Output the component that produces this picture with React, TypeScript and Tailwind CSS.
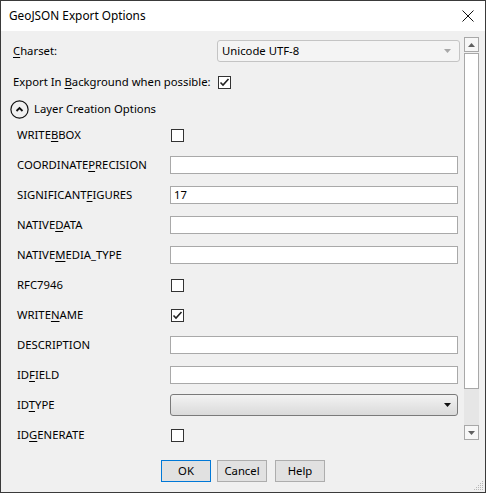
import React from 'react';

type Row = {
  pre: string;
  key?: string;
  post?: string;
  kind: 'check' | 'text' | 'select';
  checked?: boolean;
  value?: string;
};

const rows: Row[] = [
  { pre: 'WRITE', key: 'B', post: 'BOX', kind: 'check' },
  { pre: 'COORDINATE', key: 'P', post: 'RECISION', kind: 'text' },
  { pre: 'SIGNIFICANT', key: 'F', post: 'IGURES', kind: 'text', value: '17' },
  { pre: 'NATIVE', key: 'D', post: 'ATA', kind: 'text' },
  { pre: 'NATIVE', key: 'M', post: 'EDIA_TYPE', kind: 'text' },
  { pre: 'RFC7946', kind: 'check' },
  { pre: 'WRITE', key: 'N', post: 'AME', kind: 'check', checked: true },
  { pre: 'DESCRIPTION', kind: 'text' },
  { pre: 'ID', key: 'F', post: 'IELD', kind: 'text' },
  { pre: 'ID', key: 'T', post: 'YPE', kind: 'select' },
  { pre: 'ID', key: 'G', post: 'ENERATE', kind: 'check' },
];

function CheckBox({ checked }: { checked?: boolean }) {
  return (
    <div className="w-[13px] h-[13px] border border-[#333333] bg-white flex items-center justify-center">
      {checked && (
        <svg width="11" height="11" viewBox="0 0 11 11">
          <polyline points="1.5,5.5 4,8 9.5,2" fill="none" stroke="#222" strokeWidth="1.6" />
        </svg>
      )}
    </div>
  );
}

function Label({ pre, k, post }: { pre: string; k?: string; post?: string }) {
  return (
    <span className="whitespace-nowrap">
      {pre}
      {k && <u className="underline-offset-[2px]">{k}</u>}
      {post}
    </span>
  );
}

export default function App() {
  return (
    <div
      className="relative w-[486px] h-[493px] bg-[#f0f0f0] border border-[#3a3a3a] text-[11.3px] text-black overflow-hidden"
      style={{ fontFamily: '"Noto Sans", "Open Sans", sans-serif' }}
    >
      {/* Title bar */}
      <div className="h-[30px] bg-white flex items-center justify-between pl-[8px] pr-[11px]">
        <span className="text-[11.8px]">GeoJSON Export Options</span>
        <svg width="12" height="12" viewBox="0 0 12 12">
          <path d="M0.5 0.5 L11.5 11.5 M11.5 0.5 L0.5 11.5" stroke="#111" strokeWidth="1" />
        </svg>
      </div>

      <div className="flex">
        {/* Content */}
        <div className="w-[462px] pl-[12px]">
          <div className="mt-[9px] h-[22px] flex items-center">
            <div className="w-[204px]">
              <Label pre="" k="C" post="harset:" />
            </div>
            <div className="w-[243px] h-[22px] rounded-[3px] border border-[#c4c4c4] bg-[#f4f4f4] flex items-center justify-between pl-[4px] pr-[8px]">
              <span>Unicode UTF-8</span>
              <svg width="7" height="4" viewBox="0 0 7 4">
                <polygon points="0,0 7,0 3.5,4" fill="#a8a8a8" />
              </svg>
            </div>
          </div>

          <div className="mt-[9px] h-[22px] flex items-center">
            <div className="w-[205px] whitespace-nowrap">
              Export In <Label pre="" k="B" post="ackground when possible:" />
            </div>
            <CheckBox checked />
          </div>

          <div className="mt-[6px] h-[20px] flex items-center -ml-[3px] gap-[5px]">
            <svg width="19" height="19" viewBox="0 0 19 19">
              <circle cx="9.5" cy="9.5" r="8.6" fill="none" stroke="#111" strokeWidth="1.2" />
              <polyline points="6.5,11 9.5,8 12.5,11" fill="none" stroke="#111" strokeWidth="1.8" />
            </svg>
            <span>Layer Creation Options</span>
          </div>

          <div className="mt-[1px] pl-[4px]">
            {rows.map((r, i) => (
              <div key={i} className="h-[30px] flex items-center">
                <div className="w-[153px]">
                  <Label pre={r.pre} k={r.key} post={r.post} />
                </div>
                {r.kind === 'check' && (
                  <div className="pl-[1px]">
                    <CheckBox checked={r.checked} />
                  </div>
                )}
                {r.kind === 'text' && (
                  <div className="w-[288px] h-[18px] border border-[#a9a9a9] bg-white flex items-center pl-[3px] leading-none">
                    {r.value}
                  </div>
                )}
                {r.kind === 'select' && (
                  <div className="w-[288px] h-[22px] rounded-[3px] border border-[#7a7a7a] bg-gradient-to-b from-[#f3f3f3] to-[#dadada] flex items-center justify-end pr-[6px]">
                    <svg width="7" height="4" viewBox="0 0 7 4">
                      <polygon points="0,0 7,0 3.5,4" fill="#111" />
                    </svg>
                  </div>
                )}
              </div>
            ))}
          </div>
        </div>

        {/* Scrollbar */}
        <div className="ml-[1px] mt-[6px] w-[15px] flex flex-col">
          <div className="h-[15px] border border-[#a8a8a8] bg-[#f7f7f7] flex items-center justify-center">
            <svg width="7" height="4" viewBox="0 0 7 4">
              <polygon points="0,4 7,4 3.5,0" fill="#606060" />
            </svg>
          </div>
          <div className="mt-[1px] h-[336px] border border-[#a8a8a8] bg-white" />
          <div className="h-[36px] bg-[#e6e6e6]" />
          <div className="h-[15px] border border-[#a8a8a8] bg-[#f7f7f7] flex items-center justify-center">
            <svg width="7" height="4" viewBox="0 0 7 4">
              <polygon points="0,0 7,0 3.5,4" fill="#606060" />
            </svg>
          </div>
        </div>
      </div>

      {/* Buttons */}
      <div className="mt-[10px] flex justify-center">
        <button className="w-[50px] h-[22px] border border-[#0078d7] bg-[#e1e1e1]">OK</button>
        <button className="ml-[6px] w-[50px] h-[22px] border border-[#adadad] bg-[#e1e1e1]">Cancel</button>
        <button className="ml-[8px] w-[50px] h-[22px] border border-[#adadad] bg-[#e1e1e1]">Help</button>
      </div>

      {/* Resize grip */}
      <svg className="absolute right-[1px] bottom-[1px]" width="11" height="11" viewBox="0 0 11 11">
        {[
          [9, 1], [9, 3], [7, 3], [9, 5], [7, 5], [5, 5], [9, 7], [7, 7], [5, 7], [3, 7], [9, 9], [7, 9], [5, 9], [3, 9], [1, 9],
        ].map(([x, y], i) => (
          <rect key={i} x={x} y={y} width="1" height="1" fill="#b8b8b8" />
        ))}
      </svg>
    </div>
  );
}
